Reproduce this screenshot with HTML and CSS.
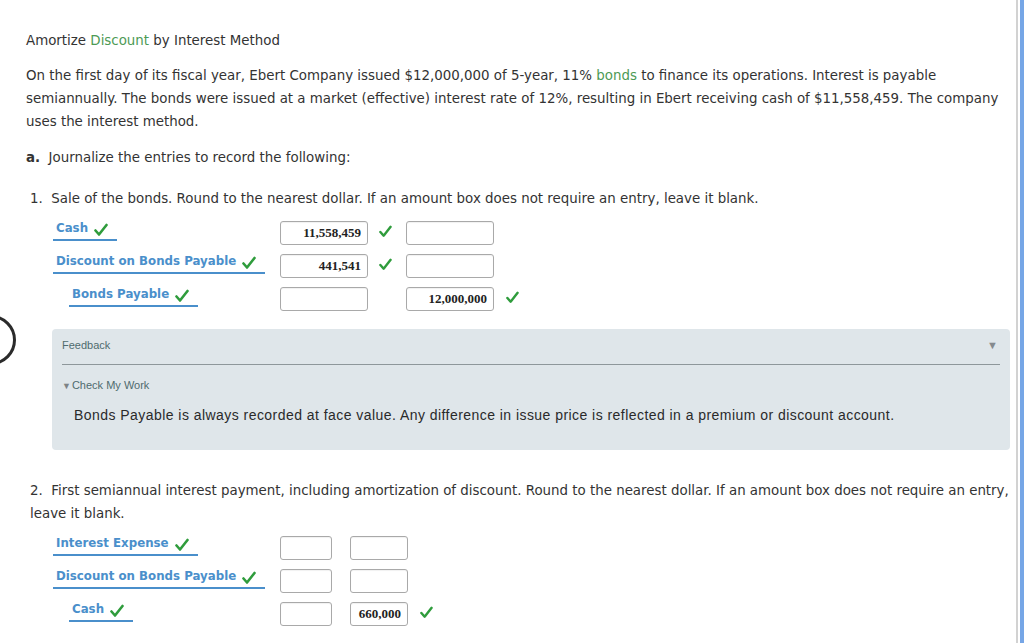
FILE: index.html
```html
<!DOCTYPE html>
<html>
<head>
<meta charset="utf-8">
<link rel="stylesheet" href="styles.css">
</head>
<body>
<div class="screen">
  <div class="frame">
    <div class="ring"></div>
    <p class="title">Amortize <span class="term">Discount</span> by Interest Method</p>
    <p class="intro">On the first day of its fiscal year, Ebert Company issued $12,000,000 of 5-year, 11% <span class="term">bonds</span> to finance its operations. Interest is payable semiannually. The bonds were issued at a market (effective) interest rate of 12%, resulting in Ebert receiving cash of $11,558,459. The company uses the interest method.</p>
    <p class="part"><b>a.</b>&nbsp; Journalize the entries to record the following:</p>

    <p class="question">1.&nbsp; Sale of the bonds. Round to the nearest dollar. If an amount box does not require an entry, leave it blank.</p>
    <div class="journal">
      <div class="jrow">
        <div class="acct"><span class="acct-name">Cash <svg class="chk" viewBox="0 0 14 14"><path d="M1.5 7.5 L5 11.5 L12.5 2"/></svg></span></div>
        <div class="amt wide">11,558,459</div>
        <div class="mark"><svg class="chk" viewBox="0 0 14 14"><path d="M1.5 7.5 L5 11.5 L12.5 2"/></svg></div>
        <div class="amt wide"></div>
        <div class="mark"></div>
      </div>
      <div class="jrow">
        <div class="acct"><span class="acct-name">Discount on Bonds Payable <svg class="chk" viewBox="0 0 14 14"><path d="M1.5 7.5 L5 11.5 L12.5 2"/></svg></span></div>
        <div class="amt wide">441,541</div>
        <div class="mark"><svg class="chk" viewBox="0 0 14 14"><path d="M1.5 7.5 L5 11.5 L12.5 2"/></svg></div>
        <div class="amt wide"></div>
        <div class="mark"></div>
      </div>
      <div class="jrow">
        <div class="acct credit"><span class="acct-name">Bonds Payable <svg class="chk" viewBox="0 0 14 14"><path d="M1.5 7.5 L5 11.5 L12.5 2"/></svg></span></div>
        <div class="amt wide"></div>
        <div class="mark"></div>
        <div class="amt wide">12,000,000</div>
        <div class="mark"><svg class="chk" viewBox="0 0 14 14"><path d="M1.5 7.5 L5 11.5 L12.5 2"/></svg></div>
      </div>
    </div>

    <div class="feedback">
      <div class="fb-head"><span>Feedback</span><span class="fb-arrow">&#9660;</span></div>
      <div class="fb-check"><span class="fb-tri">&#9660;</span>Check My Work</div>
      <p class="fb-text">Bonds Payable is always recorded at face value. Any difference in issue price is reflected in a premium or discount account.</p>
    </div>

    <p class="question q2">2.&nbsp; First semiannual interest payment, including amortization of discount. Round to the nearest dollar. If an amount box does not require an entry, leave it blank.</p>
    <div class="journal">
      <div class="jrow">
        <div class="acct"><span class="acct-name">Interest Expense <svg class="chk" viewBox="0 0 14 14"><path d="M1.5 7.5 L5 11.5 L12.5 2"/></svg></span></div>
        <div class="amt narrow1"></div>
        <div class="gap2"></div>
        <div class="amt narrow2"></div>
        <div class="mark"></div>
      </div>
      <div class="jrow">
        <div class="acct"><span class="acct-name">Discount on Bonds Payable <svg class="chk" viewBox="0 0 14 14"><path d="M1.5 7.5 L5 11.5 L12.5 2"/></svg></span></div>
        <div class="amt narrow1"></div>
        <div class="gap2"></div>
        <div class="amt narrow2"></div>
        <div class="mark"></div>
      </div>
      <div class="jrow">
        <div class="acct credit"><span class="acct-name">Cash <svg class="chk" viewBox="0 0 14 14"><path d="M1.5 7.5 L5 11.5 L12.5 2"/></svg></span></div>
        <div class="amt narrow1"></div>
        <div class="gap2"></div>
        <div class="amt narrow2">660,000</div>
        <div class="mark"><svg class="chk" viewBox="0 0 14 14"><path d="M1.5 7.5 L5 11.5 L12.5 2"/></svg></div>
      </div>
    </div>
  </div>
</div>
</body>
</html>
```

FILE: styles.css
```css
html, body {
  margin: 0;
  padding: 0;
  background: #ffffff;
}
.screen {
  width: 1024px;
  height: 643px;
  box-sizing: border-box;
  overflow: hidden;
  border-right: 4px solid #76a6e6;
  padding-right: 2px;
  display: flex;
}
.frame {
  position: relative;
  flex: 1;
  border-right: 2px solid #d2d2d2;
  padding: 29px 4px 0 26px;
  font-family: "DejaVu Sans", Verdana, sans-serif;
  font-size: 13.38px;
  line-height: 23px;
  color: #333333;
}
.frame p {
  margin: 0;
}
.ring {
  position: absolute;
  left: -34px;
  top: 315px;
  width: 44px;
  height: 44px;
  border: 3px solid #2b2b2b;
  border-radius: 50%;
}
.term {
  color: #4d9a55;
}
.intro {
  margin-top: 12px !important;
}
.part {
  margin-top: 13px !important;
}
.part b {
  font-weight: bold;
}
.question {
  margin-top: 18px !important;
  padding-left: 4px;
}
.q2 {
  margin-top: 29px !important;
}
.journal {
  margin-top: 11px;
  padding-left: 27px;
  display: flex;
  flex-direction: column;
  gap: 9px;
}
.jrow {
  display: flex;
  align-items: flex-start;
  height: 24px;
}
.acct {
  width: 227px;
  flex: none;
  display: flex;
  align-items: flex-start;
}
.acct-name {
  display: block;
  font-weight: bold;
  font-size: 11.8px;
  color: #4a8fcb;
  line-height: 14px;
  padding: 0 9px 2px 3px;
  border-bottom: 2px solid #4a8fcb;
  white-space: nowrap;
}
.acct-name .chk {
  margin-left: 2px;
  width: 14px;
  height: 14px;
  vertical-align: -5px;
}
.acct.credit {
  padding-left: 16px;
  width: 211px;
}
.chk {
  width: 13px;
  height: 13px;
  vertical-align: -4px;
}
.mark .chk {
  vertical-align: -2px;
}
.chk path {
  fill: none;
  stroke: #2f9c3c;
  stroke-width: 2.6;
  stroke-linecap: round;
  stroke-linejoin: round;
}
.amt {
  flex: none;
  height: 24px;
  box-sizing: border-box;
  border: 1px solid #a9a9a9;
  border-radius: 3px;
  box-shadow: inset 0 1px 1px rgba(0,0,0,0.06);
  font-family: "Liberation Serif", "Times New Roman", serif;
  font-weight: bold;
  font-size: 13px;
  line-height: 22px;
  text-align: right;
  padding-right: 6px;
  color: #222222;
}
.amt.wide {
  width: 88px;
}
.amt.narrow1 {
  width: 52px;
}
.amt.narrow2 {
  width: 58px;
}
.gap2 {
  width: 18px;
  flex: none;
}
.mark {
  width: 38px;
  flex: none;
  padding-left: 11px;
  box-sizing: border-box;
  line-height: 22px;
}
.jrow .mark:last-child {
  padding-left: 12px;
}
.feedback {
  margin-top: 18px;
  margin-left: 26px;
  margin-right: 2px;
  background: #dfe6ea;
  border-radius: 4px;
  padding: 9px 10px 25px 10px;
  font-family: "Liberation Sans", Arial, sans-serif;
}
.fb-head {
  display: flex;
  justify-content: space-between;
  font-size: 11px;
  line-height: 14px;
  color: #4f6b6e;
  padding-bottom: 12px;
  border-bottom: 1px solid #8e979b;
}
.fb-arrow {
  color: #858a8e;
  font-size: 11px;
  padding-right: 2px;
}
.fb-check {
  margin-top: 13px;
  font-size: 11px;
  line-height: 14px;
  color: #4f6b6e;
}
.fb-tri {
  font-size: 9px;
  color: #7d8386;
  margin-right: 1px;
}
.fb-text {
  margin-top: 12px !important;
  padding-left: 12px;
  font-size: 14px;
  letter-spacing: 0.45px;
  line-height: 20px;
  color: #2a2a2a;
}
```
